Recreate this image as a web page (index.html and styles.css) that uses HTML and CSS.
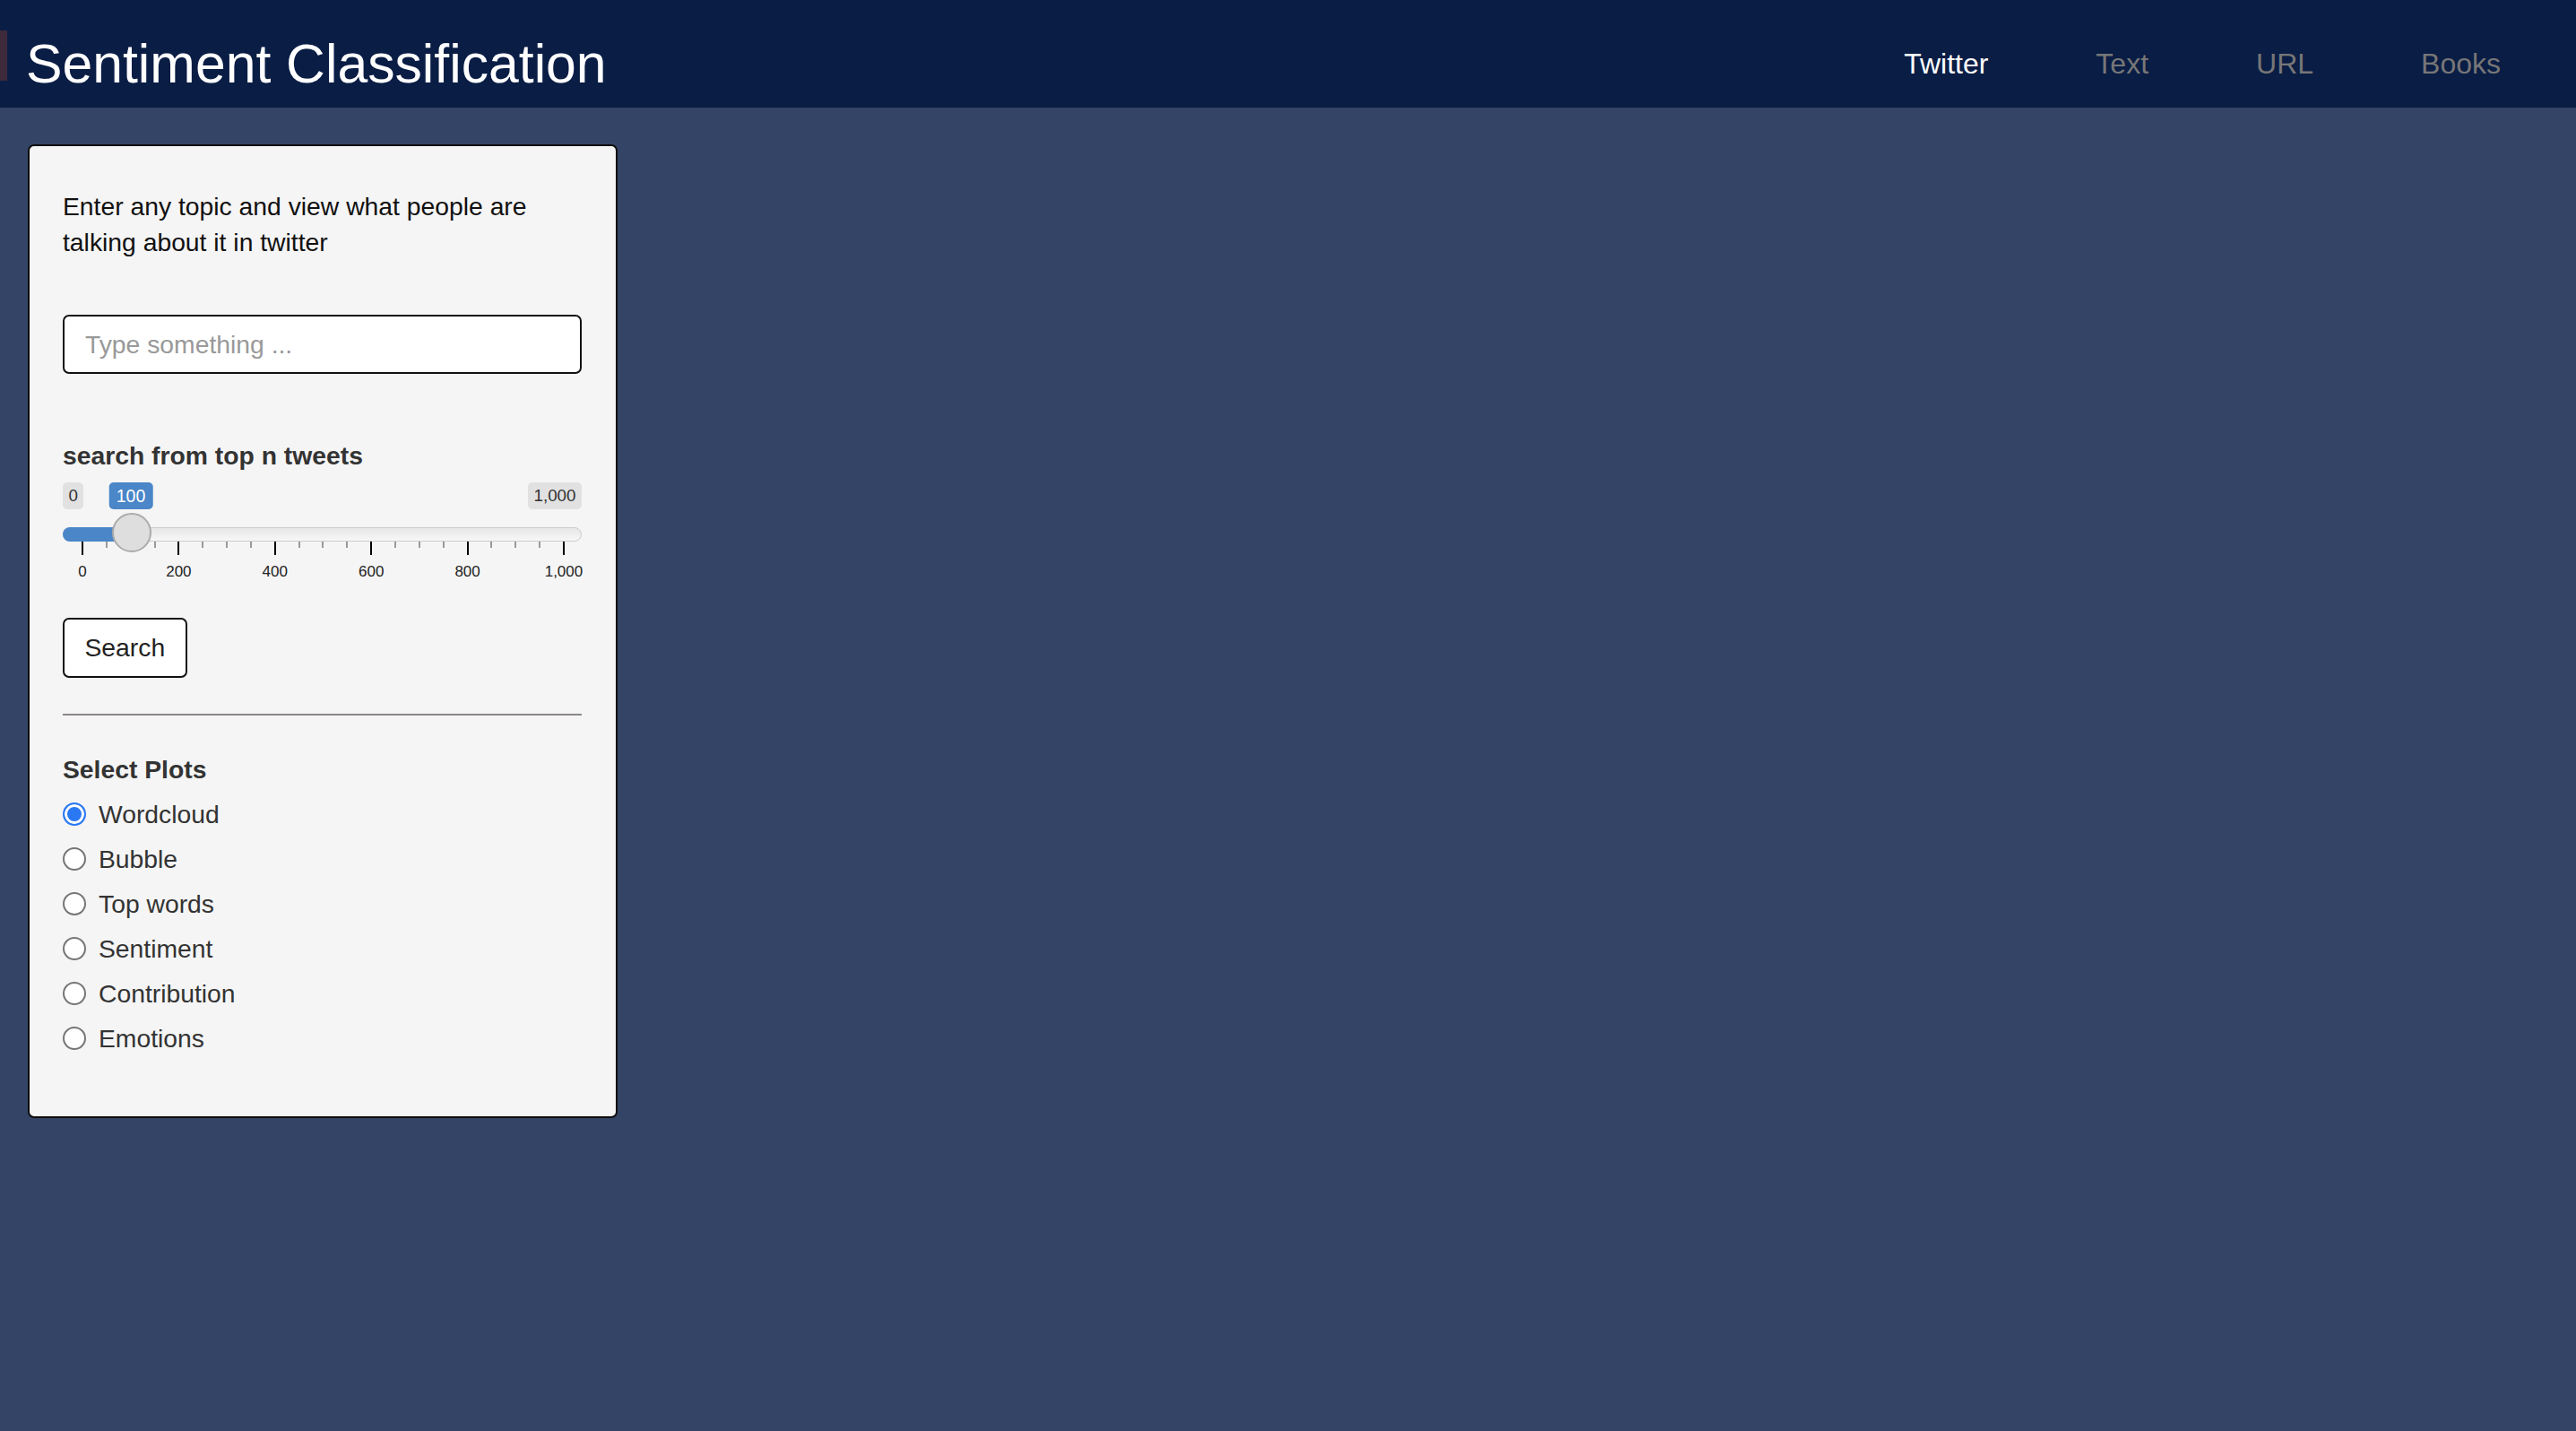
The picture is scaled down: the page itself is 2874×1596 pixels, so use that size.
FILE: index.html
```html
<!DOCTYPE html>
<html lang="en">
<head>
<meta charset="utf-8">
<title>Sentiment Classification</title>
<link rel="stylesheet" href="styles.css">
</head>
<body>
<nav class="navbar">
  <div class="brand-mark"></div>
  <div class="brand">Sentiment Classification</div>
  <ul class="nav">
    <li class="active"><a href="#">Twitter</a></li>
    <li><a href="#">Text</a></li>
    <li><a href="#">URL</a></li>
    <li><a href="#">Books</a></li>
  </ul>
</nav>
<main class="main">
  <div class="well">
    <p class="intro">Enter any topic and view what people are talking about it in twitter</p>
    <input class="text-input" type="text" placeholder="Type something ...">

    <label class="control-label">search from top n tweets</label>
    <div class="slider">
      <div class="irs-top">
        <span class="irs-minmax">0</span>
        <span class="irs-minmax">1,000</span>
        <span class="irs-from" style="left:76px">100</span>
      </div>
      <div class="irs-line">
        <span class="irs-bar" style="width:76px"></span>
        <span class="irs-handle" style="left:76px"></span>
      </div>
      <div class="irs-grid">
        <span class="pol"></span><span class="pol small"></span><span class="pol small"></span><span class="pol small"></span>
        <span class="pol"></span><span class="pol small"></span><span class="pol small"></span><span class="pol small"></span>
        <span class="pol"></span><span class="pol small"></span><span class="pol small"></span><span class="pol small"></span>
        <span class="pol"></span><span class="pol small"></span><span class="pol small"></span><span class="pol small"></span>
        <span class="pol"></span><span class="pol small"></span><span class="pol small"></span><span class="pol small"></span>
        <span class="pol"></span>
      </div>
      <div class="irs-grid-text">
        <span><span>0</span></span>
        <span><span>200</span></span>
        <span><span>400</span></span>
        <span><span>600</span></span>
        <span><span>800</span></span>
        <span><span>1,000</span></span>
      </div>
    </div>

    <button class="btn" type="button">Search</button>

    <hr class="divider">

    <label class="control-label plots-label">Select Plots</label>
    <div class="radio-group">
      <label class="radio"><input type="radio" name="plot" checked><span>Wordcloud</span></label>
      <label class="radio"><input type="radio" name="plot"><span>Bubble</span></label>
      <label class="radio"><input type="radio" name="plot"><span>Top words</span></label>
      <label class="radio"><input type="radio" name="plot"><span>Sentiment</span></label>
      <label class="radio"><input type="radio" name="plot"><span>Contribution</span></label>
      <label class="radio"><input type="radio" name="plot"><span>Emotions</span></label>
    </div>
  </div>
</main>
</body>
</html>
```

FILE: styles.css
```css
html, body {
  margin: 0;
  padding: 0;
}

body {
  background: #344466;
  font-family: "Liberation Sans", Arial, Helvetica, sans-serif;
  min-height: 1596px;
}

/* ---------- navbar ---------- */
.navbar {
  height: 120px;
  background: #0a1d45;
  display: flex;
  align-items: flex-start;
}

.brand-mark {
  width: 8px;
  height: 56px;
  margin-top: 34px;
  background: #3d2a3a;
}

.brand {
  margin: 41px 0 0 21px;
  font-size: 60.7px;
  line-height: 60px;
  color: #ffffff;
  white-space: nowrap;
}

.nav {
  display: flex;
  list-style: none;
  padding: 0;
  margin: 55px 24px 0 auto;
}

.nav a {
  display: block;
  padding: 0 60px;
  font-size: 32px;
  line-height: 32px;
  color: #777777;
  text-decoration: none;
}

.nav .active a {
  color: #ffffff;
}

/* ---------- main ---------- */
.main {
  padding: 41px 0 0 31px;
}

.well {
  width: 658px;
  box-sizing: border-box;
  background: #f5f5f5;
  border: 2px solid #0d0d0d;
  border-radius: 7px;
  padding: 47px 38px 62px 37px;
}

.intro {
  margin: 0;
  font-size: 28.3px;
  line-height: 40px;
  color: #111111;
}

.text-input {
  display: block;
  width: 100%;
  height: 66px;
  box-sizing: border-box;
  margin: 61px 0 0;
  border: 2px solid #111111;
  border-radius: 7px;
  padding: 0 23px;
  background: #ffffff;
  font-family: "Liberation Sans", Arial, sans-serif;
  font-size: 28.3px;
  color: #333333;
  outline: none;
}

.text-input::placeholder {
  color: #999999;
}

.control-label {
  display: block;
  margin-top: 71px;
  font-weight: bold;
  font-size: 28.3px;
  line-height: 40px;
  color: #333333;
}

/* ---------- slider ---------- */
.slider {
  margin-top: 10px;
}

.irs-top {
  position: relative;
  height: 30px;
  display: flex;
  justify-content: space-between;
}

.irs-minmax {
  display: block;
  height: 30px;
  padding: 0 6.5px;
  border-radius: 5px;
  background: #e1e1e1;
  color: #333333;
  font-size: 18.8px;
  line-height: 30px;
}

.irs-from {
  position: absolute;
  top: 0;
  transform: translateX(-50%);
  height: 30px;
  padding: 0 8px;
  border-radius: 5px;
  background: #4a86c8;
  color: #ffffff;
  font-size: 19.5px;
  line-height: 30px;
}

.irs-line {
  position: relative;
  margin-top: 20px;
  height: 16px;
  box-sizing: border-box;
  border: 1px solid #cccccc;
  border-radius: 8px;
  background: linear-gradient(to bottom, #dedede -50%, #ffffff 150%);
}

.irs-bar {
  position: absolute;
  left: -1px;
  top: -1px;
  height: 16px;
  background: #4a86c8;
  border-radius: 8px 0 0 8px;
}

.irs-handle {
  position: absolute;
  top: -17px;
  width: 44px;
  height: 44px;
  margin-left: -22px;
  box-sizing: border-box;
  border: 2px solid #ababab;
  border-radius: 50%;
  background: #dedede;
}

.irs-grid {
  display: flex;
  justify-content: space-between;
  align-items: flex-start;
  height: 15px;
  margin: 0 19px 0 21px;
}

.pol {
  display: block;
  width: 2px;
  height: 15px;
  background: #000000;
}

.pol.small {
  height: 7px;
  background: #9a9a9a;
}

.irs-grid-text {
  display: flex;
  justify-content: space-between;
  margin: 9px 19px 0 21px;
  font-size: 17px;
  line-height: 20px;
  color: #222222;
}

.irs-grid-text > span {
  display: flex;
  justify-content: center;
  width: 2px;
  white-space: nowrap;
}

/* ---------- button ---------- */
.btn {
  display: block;
  margin-top: 41px;
  height: 67px;
  padding: 0 22.5px;
  border: 2px solid #111111;
  border-radius: 7px;
  background: #ffffff;
  font-family: "Liberation Sans", Arial, sans-serif;
  font-size: 28.3px;
  color: #222222;
}

.divider {
  margin: 40px 0 0;
  border: 0;
  height: 2px;
  background: #8c8787;
}

.plots-label {
  margin-top: 40px;
}

.radio-group {
  margin-top: 5px;
}

.radio {
  display: flex;
  align-items: center;
  gap: 14px;
  height: 50px;
  font-size: 28.3px;
  color: #333333;
}

.radio input {
  appearance: none;
  -webkit-appearance: none;
  margin: 0;
  width: 26px;
  height: 26px;
  box-sizing: border-box;
  border: 2px solid #767676;
  border-radius: 50%;
  background: #ffffff;
}

.radio input:checked {
  border-color: #2a78f2;
  background: #2a78f2;
  box-shadow: inset 0 0 0 3px #ffffff;
}
```
